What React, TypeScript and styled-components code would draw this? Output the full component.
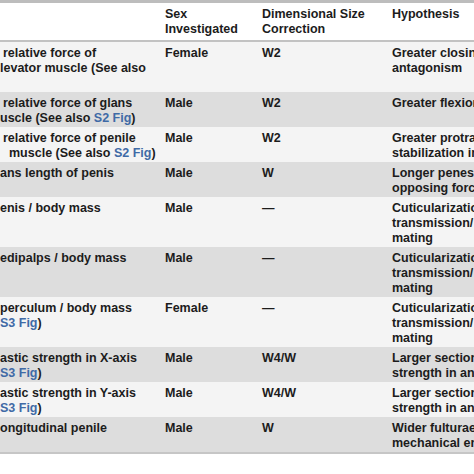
import React from 'react';
import styled, { createGlobalStyle } from 'styled-components';

const GlobalStyle = createGlobalStyle`
  html, body {
    margin: 0;
    padding: 0;
    background: #ffffff;
    overflow: hidden;
  }
  body {
    font-family: "Liberation Sans", Arial, Helvetica, sans-serif;
  }
`;

const Table = styled.table`
  border-collapse: collapse;
  table-layout: fixed;
  width: 560px;
  border-top: 3px solid #bdbdbd;
  border-bottom: 2px solid #c6c6c6;
  font-size: 12.5px;
  font-weight: bold;
  line-height: 15px;
  color: #1c1c1c;
`;

const HeadCell = styled.th<{ $first?: boolean }>`
  text-align: left;
  vertical-align: top;
  font-weight: bold;
  background: #ffffff;
  padding: 4px 0 3px ${({ $first }) => ($first ? '0' : '5px')};
  border-bottom: 2px solid #c2c2c2;
`;

const Row = styled.tr<{ $shaded: boolean }>`
  background: ${({ $shaded }) => ($shaded ? '#dddddd' : '#f4f4f4')};
`;

const Cell = styled.td<{ $first?: boolean }>`
  vertical-align: top;
  padding: 4px 0 1px ${({ $first }) => ($first ? '0' : '5px')};
  overflow: hidden;
`;

const Line = styled.div<{ $indent?: number }>`
  white-space: nowrap;
  padding-left: ${({ $indent }) => $indent ?? 0}px;
`;

const FigLink = styled.span`
  color: #3f6aa6;
`;

type Part = string | { fig: string };
type TextLine = { parts: Part[]; indent?: number };

type TraitRow = {
  trait: TextLine[];
  sex: string;
  correction: string;
  hypothesis: string[];
};

const rows: TraitRow[] = [
  {
    trait: [
      { parts: ['relative force of'], indent: 3 },
      { parts: ['levator muscle (See also'] },
      { parts: ['\u00a0'] },
    ],
    sex: 'Female',
    correction: 'W2',
    hypothesis: ['Greater closing force', 'antagonism'],
  },
  {
    trait: [
      { parts: ['relative force of glans'], indent: 3 },
      { parts: ['uscle (See also ', { fig: 'S2 Fig' }, ')'] },
    ],
    sex: 'Male',
    correction: 'W2',
    hypothesis: ['Greater flexion force'],
  },
  {
    trait: [
      { parts: ['relative force of penile'], indent: 3 },
      { parts: ['muscle (See also ', { fig: 'S2 Fig' }, ')'], indent: 9 },
    ],
    sex: 'Male',
    correction: 'W2',
    hypothesis: ['Greater protraction', 'stabilization in'],
  },
  {
    trait: [{ parts: ['ans length of penis'] }],
    sex: 'Male',
    correction: 'W',
    hypothesis: ['Longer penes and', 'opposing forces'],
  },
  {
    trait: [{ parts: ['enis / body mass'] }],
    sex: 'Male',
    correction: '\u2014',
    hypothesis: ['Cuticularization', 'transmission/', 'mating'],
  },
  {
    trait: [{ parts: ['edipalps / body mass'] }],
    sex: 'Male',
    correction: '\u2014',
    hypothesis: ['Cuticularization', 'transmission/', 'mating'],
  },
  {
    trait: [
      { parts: ['perculum / body mass'] },
      { parts: [{ fig: 'S3 Fig' }, ')'], indent: -2 },
    ],
    sex: 'Female',
    correction: '\u2014',
    hypothesis: ['Cuticularization', 'transmission/', 'mating'],
  },
  {
    trait: [
      { parts: ['astic strength in X-axis'] },
      { parts: [{ fig: 'S3 Fig' }, ')'], indent: -2 },
    ],
    sex: 'Male',
    correction: 'W4/W',
    hypothesis: ['Larger section', 'strength in and'],
  },
  {
    trait: [
      { parts: ['astic strength in Y-axis'] },
      { parts: [{ fig: 'S3 Fig' }, ')'], indent: -2 },
    ],
    sex: 'Male',
    correction: 'W4/W',
    hypothesis: ['Larger section', 'strength in and'],
  },
  {
    trait: [{ parts: ['ongitudinal penile'] }],
    sex: 'Male',
    correction: 'W',
    hypothesis: ['Wider fulturae', 'mechanical energy'],
  },
];

const renderParts = (parts: Part[]) =>
  parts.map((p, i) =>
    typeof p === 'string' ? <React.Fragment key={i}>{p}</React.Fragment> : <FigLink key={i}>{p.fig}</FigLink>
  );

const App: React.FC = () => {
  return (
    <>
      <GlobalStyle />
      <Table>
        <colgroup>
          <col style={{ width: 160 }} />
          <col style={{ width: 97 }} />
          <col style={{ width: 130 }} />
          <col style={{ width: 173 }} />
        </colgroup>
        <thead>
          <tr>
            <HeadCell $first>
              <Line>&nbsp;</Line>
              <Line>&nbsp;</Line>
            </HeadCell>
            <HeadCell>
              <Line>Sex</Line>
              <Line>Investigated</Line>
            </HeadCell>
            <HeadCell>
              <Line>Dimensional Size</Line>
              <Line>Correction</Line>
            </HeadCell>
            <HeadCell>
              <Line>Hypothesis</Line>
            </HeadCell>
          </tr>
        </thead>
        <tbody>
          {rows.map((row, i) => (
            <Row key={i} $shaded={i % 2 === 1}>
              <Cell $first>
                {row.trait.map((line, j) => (
                  <Line key={j} $indent={line.indent}>
                    {renderParts(line.parts)}
                  </Line>
                ))}
              </Cell>
              <Cell>
                <Line>{row.sex}</Line>
              </Cell>
              <Cell>
                <Line>{row.correction}</Line>
              </Cell>
              <Cell>
                {row.hypothesis.map((h, j) => (
                  <Line key={j}>{h}</Line>
                ))}
              </Cell>
            </Row>
          ))}
        </tbody>
      </Table>
    </>
  );
};

export default App;
